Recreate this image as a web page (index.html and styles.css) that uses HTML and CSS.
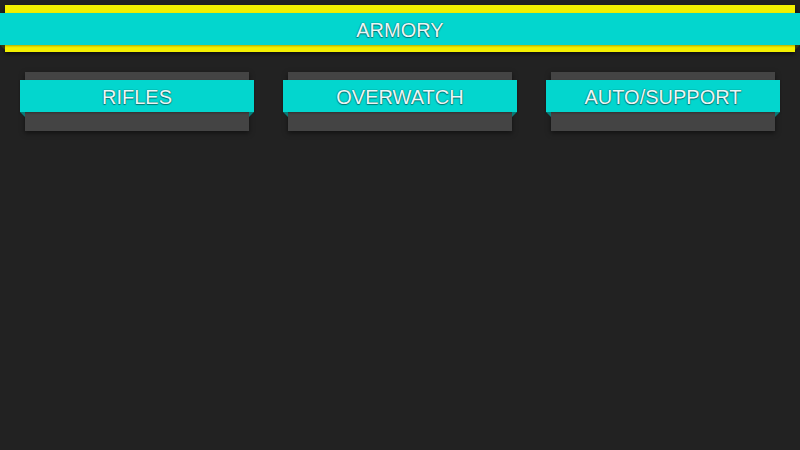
FILE: index.html
```html
<!DOCTYPE html>
<html>
<head>
<meta charset="utf-8">
<link rel="stylesheet" href="styles.css">
</head>
<body>
<header class="banner">
  <div class="ribbon ribbon-main">ARMORY</div>
</header>
<main class="categories">
  <section class="card"><div class="ribbon">RIFLES</div></section>
  <section class="card"><div class="ribbon">OVERWATCH</div></section>
  <section class="card"><div class="ribbon">AUTO/SUPPORT</div></section>
</main>
</body>
</html>
```
FILE: styles.css
```css
html, body {
  margin: 0;
  padding: 0;
  background: #222222;
  width: 800px;
  height: 450px;
  overflow: hidden;
  font-family: "Liberation Sans", Arial, sans-serif;
}
.banner {
  margin: 5px 5px 0 5px;
  background: #f2f000;
  padding: 8px 0 7px 0;
  box-shadow: 0 2px 4px rgba(0,0,0,0.6);
}
.ribbon {
  position: relative;
  margin: 0 -5px;
  height: 32px;
  line-height: 34px;
  background: #03d6ce;
  color: #eaf6f6;
  font-size: 20px;
  text-align: center;
  text-shadow: 0 0 1px #0a6d6a, 0 0 1px #0a6d6a, 0 1px 1px rgba(0,60,60,0.6);
  box-shadow: 0 1px 2px rgba(0,0,0,0.3);
}
.ribbon::before, .ribbon::after {
  content: "";
  position: absolute;
  top: 100%;
  width: 0;
  height: 0;
  border-top: 5px solid #087a77;
}
.ribbon::before {
  left: 0;
  border-left: 5px solid transparent;
}
.ribbon::after {
  right: 0;
  border-right: 5px solid transparent;
}
.ribbon-main::before, .ribbon-main::after {
  border-top-color: #3a3a10;
}
.categories {
  display: flex;
  gap: 39px;
  padding: 20px 25px 0 25px;
}
.card {
  width: 224px;
  background: #444444;
  padding: 8px 0 19px 0;
  box-shadow: 0 2px 5px rgba(0,0,0,0.5);
}
```
